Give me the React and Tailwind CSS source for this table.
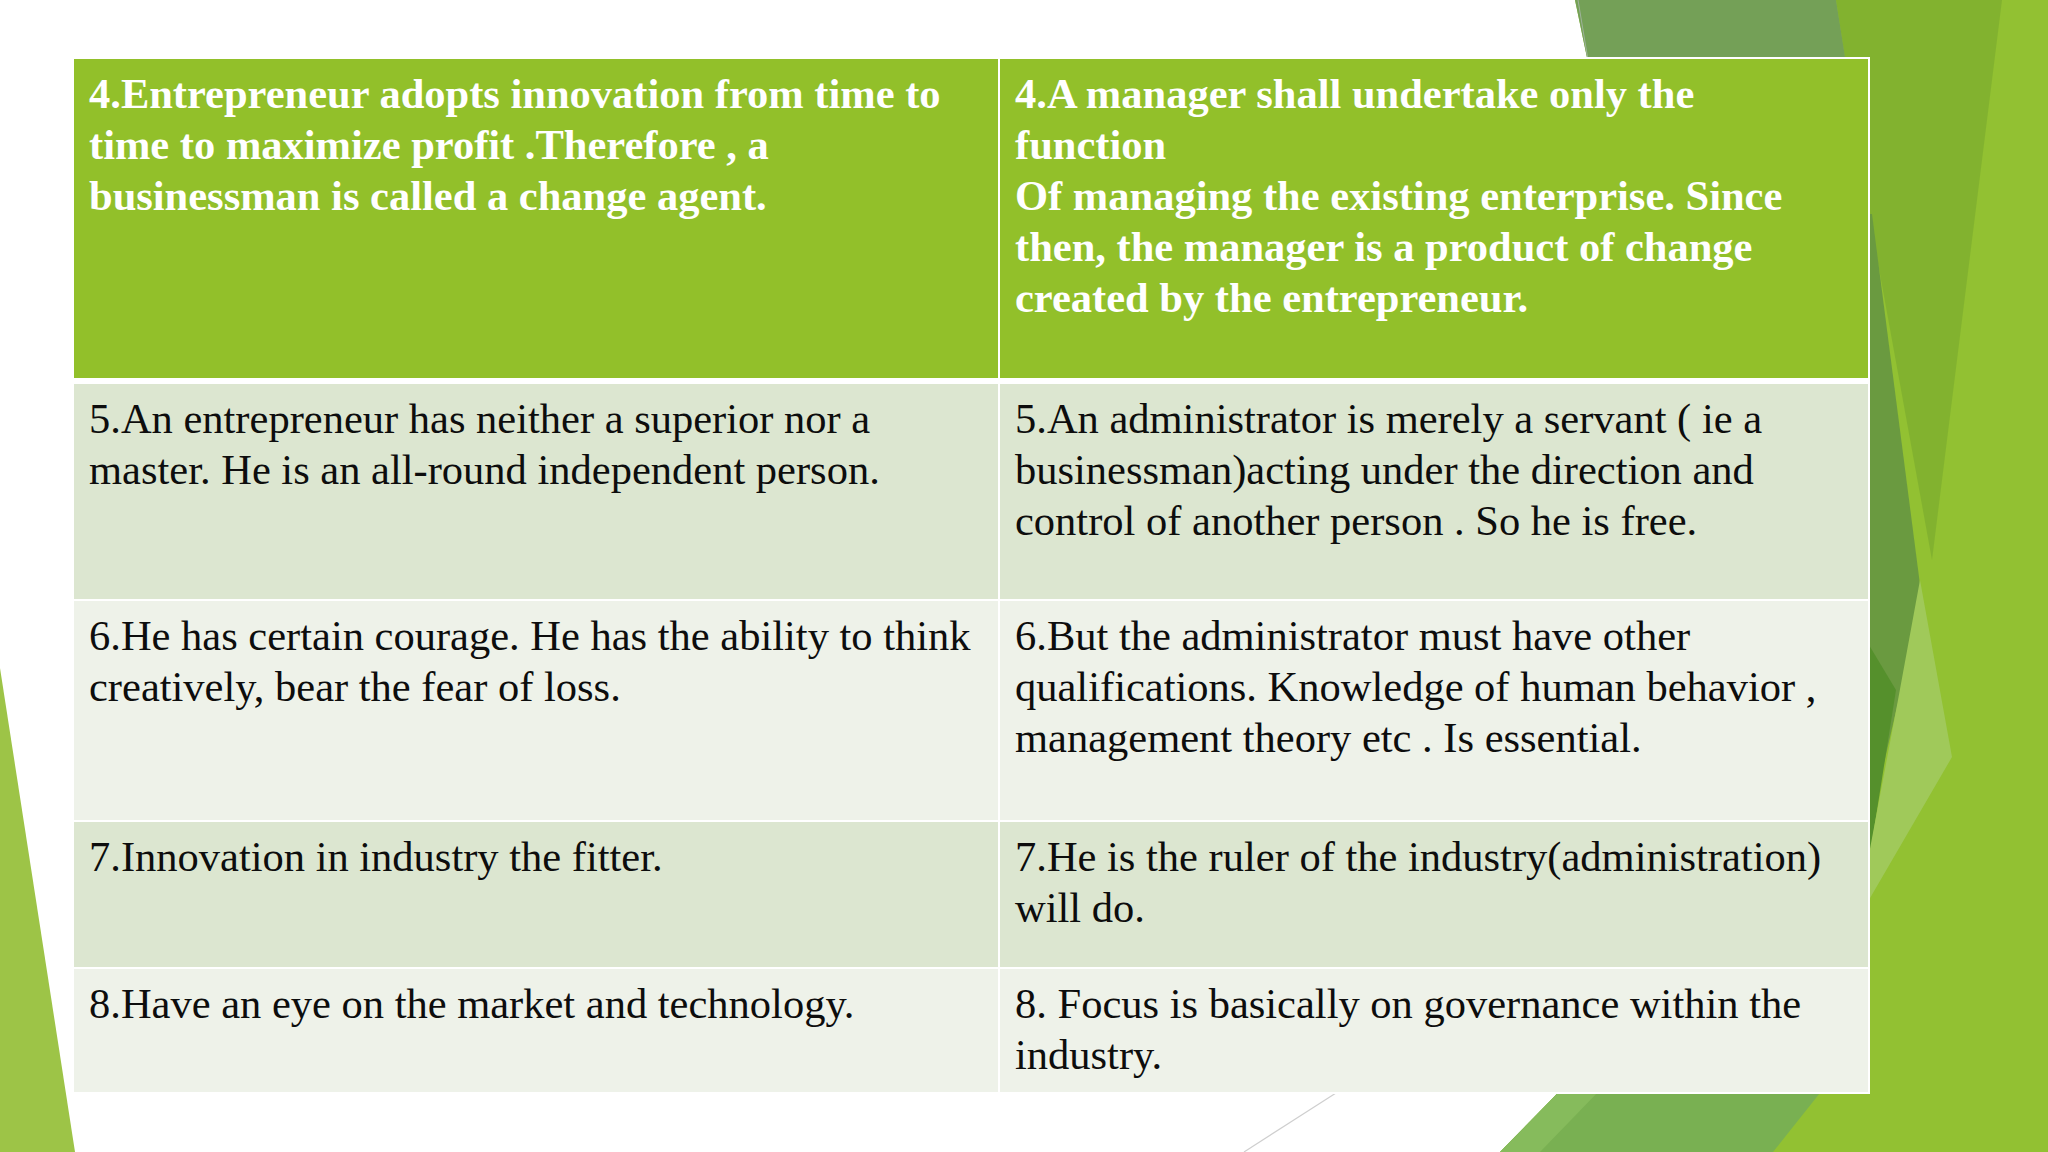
import React from "react";

const rows = [
  {
    head: true,
    h: "h-[319px]",
    bg: "bg-[#92c02a]",
    left: [
      "4.Entrepreneur adopts innovation from time to",
      "time to maximize profit .Therefore , a",
      "businessman is called a change agent.",
    ],
    right: [
      "4.A manager shall undertake only the",
      "function",
      "Of managing the existing enterprise. Since",
      "then, the manager is a product of change",
      "created by the entrepreneur.",
    ],
  },
  {
    h: "h-[215px]",
    bg: "bg-[#dce6d0]",
    left: [
      "5.An entrepreneur has neither a superior nor a",
      "master. He is an all-round independent person.",
    ],
    right: [
      "5.An administrator is merely a servant ( ie a",
      "businessman)acting under the direction and",
      "control of another person . So he is free.",
    ],
  },
  {
    h: "h-[219px]",
    bg: "bg-[#eef2e9]",
    left: [
      "6.He has certain courage. He has the ability to think",
      "creatively, bear the fear of loss.",
    ],
    right: [
      "6.But the administrator must have other",
      "qualifications. Knowledge of human behavior ,",
      "management theory etc . Is essential.",
    ],
  },
  {
    h: "h-[145px]",
    bg: "bg-[#dce6d0]",
    left: ["7.Innovation in industry the fitter."],
    right: [
      "7.He is the ruler of the industry(administration)",
      "will do.",
    ],
  },
  {
    h: "h-[123px]",
    bg: "bg-[#eef2e9]",
    left: ["8.Have an eye on the market and technology."],
    right: [
      "8. Focus is basically on governance within the",
      "industry.",
    ],
  },
];

function Cell({ lines, head, bg }) {
  return (
    <div
      className={`${bg} pt-[9px] px-[15px] overflow-hidden ${
        head ? "text-white font-bold" : "text-[#0d0d0d]"
      }`}
    >
      {lines.map((l, i) => (
        <div key={i} className="whitespace-nowrap">
          {l}
        </div>
      ))}
    </div>
  );
}

function Decor() {
  return (
    <svg
      className="absolute inset-0"
      width="2048"
      height="1152"
      viewBox="0 0 2048 1152"
    >
      <polygon
        points="1575,0 2048,0 2048,1152 1500,1152 1590,1060 1600,120"
        fill="#92c132"
      />
      <polygon points="1836,0 2002,0 1932,560 1872,230" fill="#82b22f" />
      <polygon
        points="1575,0 1836,0 1855,120 1872,230 1869,1000 1600,120"
        fill="#74a057"
      />
      <polygon points="1866,214 1872,214 1922,600 1866,840" fill="#6a9a40" />
      <polygon points="1866,640 1896,690 1866,880" fill="#55902c" />
      <polygon
        points="1920,580 1952,757 1866,905 1866,870 1898,700"
        fill="#a0c95a"
      />
      <polygon
        points="1500,1152 1773,1152 1870,1030 1870,1000 1590,1060"
        fill="#79b052"
      />
      <polygon
        points="1500,1152 1540,1152 1600,1090 1590,1060"
        fill="#86bb5c"
      />
      <line x1="1578" y1="0" x2="1588" y2="60" stroke="#9fb39a" strokeWidth="1" />
      <line x1="1244" y1="1152" x2="1336" y2="1093" stroke="#cfcfcf" strokeWidth="1.2" />
      <polygon points="0,668 75,1152 0,1152" fill="#9dc447" />
    </svg>
  );
}

export default function App() {
  return (
    <div className="relative w-[2048px] h-[1152px] bg-white overflow-hidden font-['Liberation_Serif','Times_New_Roman',serif] text-[42.5px] leading-[51px]">
      <Decor />
      <div className="relative pt-[57px] pl-[72px]">
        <div className="w-[1798px] bg-white p-[2px] flex flex-col gap-[2px]">
          {rows.map((r, i) => (
            <div
              key={i}
              className={`grid grid-cols-[924px_868px] gap-[2px] ${r.h} ${
                r.head ? "mb-[4px]" : ""
              }`}
            >
              <Cell lines={r.left} head={r.head} bg={r.bg} />
              <Cell lines={r.right} head={r.head} bg={r.bg} />
            </div>
          ))}
        </div>
      </div>
    </div>
  );
}
